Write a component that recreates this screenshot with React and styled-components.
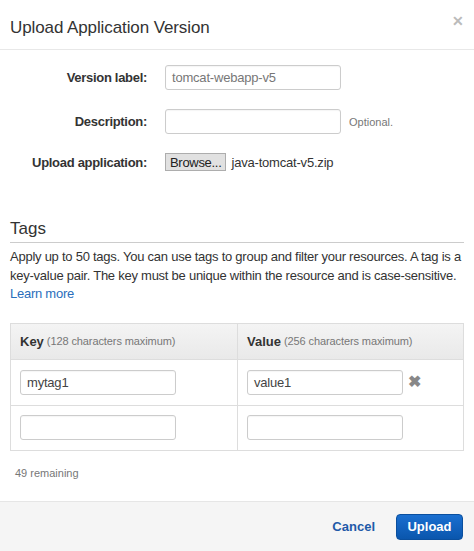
import styled, { createGlobalStyle } from "styled-components";

const GlobalStyle = createGlobalStyle`
  html, body {
    margin: 0;
    padding: 0;
    background: #fff;
  }
  body {
    font-family: "Liberation Sans", Arial, sans-serif;
    color: #333;
  }
`;

const Dialog = styled.div`
  width: 474px;
  height: 551px;
  display: flex;
  flex-direction: column;
  background: #fff;
  overflow: hidden;
`;

const Header = styled.div`
  height: 50px;
  box-sizing: border-box;
  border-bottom: 1px solid #e8e8e8;
  display: flex;
  align-items: center;
  justify-content: space-between;
  padding: 6px 10px 0 10px;
`;

const Title = styled.h1`
  margin: 0;
  font-size: 17px;
  font-weight: normal;
  color: #333;
  letter-spacing: -0.1px;
`;

const Close = styled.span`
  font-size: 14px;
  color: #bbb;
  font-weight: bold;
  margin-top: -14px;
`;

const Body = styled.div`
  flex: 1;
  padding: 0 10px;
`;

const Form = styled.div`
  display: grid;
  grid-template-columns: 137px auto;
  column-gap: 18px;
  row-gap: 19px;
  align-items: center;
  padding-top: 15px;
`;

const Label = styled.label`
  text-align: right;
  font-size: 13px;
  font-weight: bold;
  color: #333;
  letter-spacing: -0.3px;
`;

const Field = styled.div`
  display: flex;
  align-items: center;
  gap: 8px;
`;

const Input = styled.div`
  width: ${({ w }) => w}px;
  height: 25px;
  box-sizing: border-box;
  border: 1px solid #ccc;
  border-radius: 3px;
  background: #fff;
  font-size: 13px;
  color: ${({ muted }) => (muted ? "#777" : "#444")};
  padding: 0 6px;
  display: flex;
  align-items: center;
  letter-spacing: -0.2px;
  box-shadow: inset 0 1px 1px rgba(0, 0, 0, 0.04);
`;

const Hint = styled.span`
  font-size: 11px;
  color: #777;
`;

const Browse = styled.span`
  height: 18px;
  box-sizing: border-box;
  padding: 0 4px;
  border: 1px solid #adadad;
  background: #e1e1e1;
  font-size: 13px;
  color: #222;
  display: flex;
  align-items: center;
  letter-spacing: -0.3px;
`;

const FileName = styled.span`
  font-size: 13px;
  color: #333;
  margin-left: -3px;
  letter-spacing: -0.2px;
`;

const SectionTitle = styled.h2`
  margin: 48px 0 0;
  font-size: 17px;
  font-weight: normal;
  color: #333;
  padding-bottom: 3px;
  border-bottom: 1px solid #ccc;
`;

const Para = styled.p`
  margin: 5px 0 0;
  font-size: 13px;
  line-height: 18.5px;
  color: #333;
  letter-spacing: -0.25px;
`;

const Link = styled.a`
  color: #2a6ebb;
  text-decoration: none;
`;

const Table = styled.div`
  margin-top: 19px;
  border: 1px solid #ddd;
  display: grid;
  grid-template-columns: 226px auto;
`;

const HeadCell = styled.div`
  height: 36px;
  box-sizing: border-box;
  background: linear-gradient(#f4f4f4, #e9e9e9);
  border-bottom: 1px solid #ddd;
  border-left: ${({ first }) => (first ? "none" : "1px solid #ddd")};
  display: flex;
  align-items: center;
  padding-left: 9px;
  font-size: 13px;
  font-weight: bold;
  color: #333;
`;

const Small = styled.span`
  font-weight: normal;
  font-size: 11px;
  color: #777;
  margin-left: 3px;
  letter-spacing: -0.1px;
`;

const Cell = styled.div`
  height: 45px;
  box-sizing: border-box;
  border-left: ${({ first }) => (first ? "none" : "1px solid #ddd")};
  border-top: ${({ top }) => (top ? "1px solid #ddd" : "none")};
  display: flex;
  align-items: center;
  gap: 5px;
  padding-left: 9px;
`;

const Remove = styled.span`
  font-size: 16px;
  font-weight: bold;
  color: #888;
  line-height: 1;
`;

const Remaining = styled.div`
  margin-top: 16px;
  padding-left: 5px;
  font-size: 11px;
  color: #777;
`;

const Footer = styled.div`
  height: 50px;
  box-sizing: border-box;
  background: #f5f5f5;
  border-top: 1px solid #e6e6e6;
  display: flex;
  align-items: center;
  justify-content: flex-end;
  gap: 21px;
  padding: 0 11px 0 0;
`;

const Cancel = styled.span`
  font-size: 13px;
  font-weight: bold;
  color: #1e5aa8;
`;

const Primary = styled.span`
  width: 67px;
  height: 26px;
  border-radius: 4px;
  background: linear-gradient(#1a6fd0, #0a56ad);
  border: 1px solid #0a4f9e;
  box-sizing: border-box;
  color: #fff;
  font-size: 13px;
  font-weight: bold;
  display: flex;
  align-items: center;
  justify-content: center;
`;

const App = () => {
  return (
    <>
      <GlobalStyle />
      <Dialog>
        <Header>
          <Title>Upload Application Version</Title>
          <Close>✕</Close>
        </Header>
        <Body>
          <Form>
            <Label>Version label:</Label>
            <Field>
              <Input w={176} muted>
                tomcat-webapp-v5
              </Input>
            </Field>
            <Label>Description:</Label>
            <Field>
              <Input w={176} />
              <Hint>Optional.</Hint>
            </Field>
            <Label>Upload application:</Label>
            <Field>
              <Browse>Browse...</Browse>
              <FileName>java-tomcat-v5.zip</FileName>
            </Field>
          </Form>
          <SectionTitle>Tags</SectionTitle>
          <Para>
            Apply up to 50 tags. You can use tags to group and filter your
            resources. A tag is a key-value pair. The key must be unique within
            the resource and is case-sensitive.
            <br />
            <Link href="#">Learn more</Link>
          </Para>
          <Table>
            <HeadCell first>
              Key<Small>(128 characters maximum)</Small>
            </HeadCell>
            <HeadCell>
              Value<Small>(256 characters maximum)</Small>
            </HeadCell>
            <Cell first>
              <Input w={156}>mytag1</Input>
            </Cell>
            <Cell>
              <Input w={156}>value1</Input>
              <Remove>✖</Remove>
            </Cell>
            <Cell first top>
              <Input w={156} />
            </Cell>
            <Cell top>
              <Input w={156} />
            </Cell>
          </Table>
          <Remaining>49 remaining</Remaining>
        </Body>
        <Footer>
          <Cancel>Cancel</Cancel>
          <Primary>Upload</Primary>
        </Footer>
      </Dialog>
    </>
  );
};

export default App;
